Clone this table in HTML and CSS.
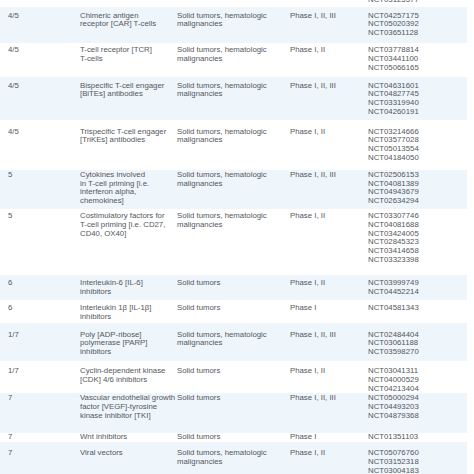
FILE: index.html
```html
<!DOCTYPE html>
<html>
<head>
<meta charset="utf-8">
<link rel="stylesheet" href="styles.css">
</head>
<body>
<table class="trials">
<colgroup>
<col class="c-stage"><col class="c-agent"><col class="c-tumor"><col class="c-phase"><col class="c-nct">
</colgroup>
<tbody>
<tr class="row-top"><td></td><td></td><td></td><td></td><td>NCT03125577</td></tr>
<tr class="alt"><td>4/5</td><td>Chimeric antigen<br>receptor [CAR] T-cells</td><td>Solid tumors, hematologic<br>malignancies</td><td>Phase I, II, III</td><td>NCT04257175<br>NCT05020392<br>NCT03651128</td></tr>
<tr><td>4/5</td><td>T-cell receptor [TCR]<br>T-cells</td><td>Solid tumors, hematologic<br>malignancies</td><td>Phase I, II</td><td>NCT03778814<br>NCT03441100<br>NCT05066165</td></tr>
<tr class="alt"><td>4/5</td><td>Bispecific T-cell engager<br>[BiTEs] antibodies</td><td>Solid tumors, hematologic<br>malignancies</td><td>Phase I, II, III</td><td>NCT04631601<br>NCT04827745<br>NCT03319940<br>NCT04260191</td></tr>
<tr><td>4/5</td><td>Trispecific T-cell engager<br>[TriKEs] antibodies</td><td>Solid tumors, hematologic<br>malignancies</td><td>Phase I, II</td><td>NCT03214666<br>NCT03577028<br>NCT05013554<br>NCT04184050</td></tr>
<tr class="alt"><td>5</td><td>Cytokines involved<br>in T-cell priming [i.e.<br>interferon alpha,<br>chemokines]</td><td>Solid tumors, hematologic<br>malignancies</td><td>Phase I, II, III</td><td>NCT02506153<br>NCT04081389<br>NCT04943679<br>NCT02634294</td></tr>
<tr><td>5</td><td>Costimulatory factors for<br>T-cell priming [i.e. CD27,<br>CD40, OX40]</td><td>Solid tumors, hematologic<br>malignancies</td><td>Phase I, II</td><td>NCT03307746<br>NCT04081688<br>NCT03424005<br>NCT02845323<br>NCT03414658<br>NCT03323398</td></tr>
<tr class="alt"><td>6</td><td>Interleukin-6 [IL-6]<br>inhibitors</td><td>Solid tumors</td><td>Phase I, II</td><td>NCT03999749<br>NCT04452214</td></tr>
<tr><td>6</td><td>Interleukin 1β [IL-1β]<br>inhibitors</td><td>Solid tumors</td><td>Phase I</td><td>NCT04581343</td></tr>
<tr class="alt"><td>1/7</td><td>Poly [ADP-ribose]<br>polymerase [PARP]<br>inhibitors</td><td>Solid tumors, hematologic<br>malignancies</td><td>Phase I, II, III</td><td>NCT02484404<br>NCT03061188<br>NCT03598270</td></tr>
<tr><td>1/7</td><td>Cyclin-dependent kinase<br>[CDK] 4/6 inhibitors</td><td>Solid tumors</td><td>Phase I, II</td><td>NCT03041311<br>NCT04000529<br>NCT04213404</td></tr>
<tr class="alt"><td>7</td><td>Vascular endothelial growth<br>factor [VEGF]-tyrosine<br>kinase inhibitor [TKI]</td><td>Solid tumors</td><td>Phase I, II, III</td><td>NCT05000294<br>NCT04493203<br>NCT04879368</td></tr>
<tr><td>7</td><td>Wnt inhibitors</td><td>Solid tumors</td><td>Phase I</td><td>NCT01351103</td></tr>
<tr class="alt"><td>7</td><td>Viral vectors</td><td>Solid tumors, hematologic<br>malignancies</td><td>Phase I, II</td><td>NCT05076760<br>NCT03152318<br>NCT03004183</td></tr>
</tbody>
</table>
</body>
</html>
```
FILE: styles.css
```css
html, body {
  margin: 0;
  padding: 0;
  background: #ffffff;
  overflow: hidden;
}

.trials {
  width: 467px;
  margin-top: -4px;
  border-collapse: collapse;
  table-layout: fixed;
  font-family: "Liberation Sans", Arial, sans-serif;
  font-size: 7.8px;
  line-height: 8.67px;
  color: #54575c;
}

.c-stage { width: 72px; }
.c-agent { width: 97px; }
.c-tumor { width: 113px; }
.c-phase { width: 78px; }
.c-nct { width: 107px; }

.trials td {
  vertical-align: top;
  padding: 0 0 0 8px;
  white-space: nowrap;
}

.trials tr.alt { background: #eef5fb; }

.trials tr.row-top { height: 11px; }

/* row heights and top spacing follow the source table */
.trials tr:nth-child(2) { height: 36px; }
.trials tr:nth-child(2) td { padding-top: 4.7px; }
.trials tr:nth-child(3) { height: 34px; }
.trials tr:nth-child(3) td { padding-top: 3.3px; }
.trials tr:nth-child(4) { height: 43px; }
.trials tr:nth-child(4) td { padding-top: 4.7px; }
.trials tr:nth-child(5) { height: 50px; }
.trials tr:nth-child(5) td { padding-top: 7.7px; }
.trials tr:nth-child(6) { height: 39px; }
.trials tr:nth-child(6) td { padding-top: 1px; }
.trials tr:nth-child(7) { height: 66px; }
.trials tr:nth-child(7) td { padding-top: 3.3px; }
.trials tr:nth-child(8) { height: 25px; }
.trials tr:nth-child(8) td { padding-top: 4px; }
.trials tr:nth-child(9) { height: 23px; }
.trials tr:nth-child(9) td { padding-top: 4.3px; }
.trials tr:nth-child(10) { height: 38px; }
.trials tr:nth-child(10) td { padding-top: 7.7px; }
.trials tr:nth-child(11) { height: 31px; }
.trials tr:nth-child(11) td { padding-top: 6.3px; }
.trials tr:nth-child(12) { height: 40px; }
.trials tr:nth-child(12) td { padding-top: 1px; }
.trials tr:nth-child(13) { height: 9px; }
.trials tr:nth-child(13) td { padding-top: 0; }
.trials tr:nth-child(14) { height: 40px; }
.trials tr:nth-child(14) td { padding-top: 7px; }
```
